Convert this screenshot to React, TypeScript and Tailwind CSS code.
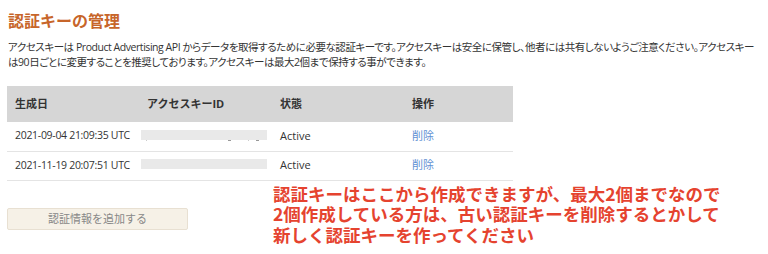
const rows = [
  { created: '2021-09-04 21:09:35 UTC', status: 'Active', specks: true },
  { created: '2021-11-19 20:07:51 UTC', status: 'Active', specks: false },
]

export default function App() {
  return (
    <div className="w-[768px] h-[254px] overflow-hidden bg-white pl-[8px] pt-[8px] text-[#333] font-['Open_Sans','Noto_Sans_CJK_JP',sans-serif]">
      <h1 className="text-[16px] leading-[24px] font-bold text-[#c7652a] font-['Noto_Sans_CJK_JP',sans-serif]">認証キーの管理</h1>

      <p className="mt-[8px] text-[10.5px] leading-[15px] tracking-[-0.45px] whitespace-nowrap [font-feature-settings:'palt']">
        アクセスキーは Product Advertising API からデータを取得するために必要な認証キーです。アクセスキーは安全に保管し、他者には共有しないようご注意ください。アクセスキー
        <br />
        は90日ごとに変更することを推奨しております。アクセスキーは最大2個まで保持する事ができます。
      </p>

      <table className="mt-[16px] -ml-[1px] w-[506px] table-fixed text-[11px] whitespace-nowrap">
        <thead>
          <tr className="bg-[#d6d6d6]">
            <th className="w-[132px] h-[36px] pl-[8px] text-left font-bold">生成日</th>
            <th className="w-[133px] h-[36px] pl-[8px] text-left font-bold">アクセスキーID</th>
            <th className="w-[132px] h-[36px] pl-[8px] text-left font-bold">状態</th>
            <th className="h-[36px] pl-[8px] text-left font-bold">操作</th>
          </tr>
        </thead>
        <tbody>
          {rows.map(r => (
            <tr key={r.created}>
              <td className="h-[29px] pl-[8px] border-b border-[#e4e4e4] text-[10.5px] tracking-[-0.3px]">{r.created}</td>
              <td className="h-[29px] border-b border-[#e4e4e4]">
                <div className="relative ml-[2px] -mt-[3px] w-[126px] h-[10px] bg-[#e9e9e9]">
                  {r.specks && (
                    <>
                      <span className="absolute left-[87px] top-[10px] w-[3px] h-[1px] bg-[#999]" />
                      <span className="absolute left-[115px] top-[10px] w-[3px] h-[1px] bg-[#999]" />
                      <span className="absolute left-[5px] top-[10px] w-[1px] h-[1px] bg-[#ccc]" />
                      <span className="absolute left-[107px] top-[10px] w-[1px] h-[1px] bg-[#ccc]" />
                    </>
                  )}
                </div>
              </td>
              <td className="h-[29px] pl-[8px] border-b border-[#e4e4e4]">{r.status}</td>
              <td className="h-[29px] pl-[8px] border-b border-[#e4e4e4] text-[#5f8fd3]">削除</td>
            </tr>
          ))}
        </tbody>
      </table>

      <div className="flex items-start">
        <button className="mt-[27px] -ml-[1px] w-[181px] h-[22px] rounded-[2px] border border-[#e8e0d2] bg-[#f6f1e7] text-[11px] text-[#888] font-['Noto_Sans_CJK_JP',sans-serif]">
          認証情報を追加する
        </button>
        <p className="mt-[3px] ml-[85px] text-[17.5px] leading-[20.5px] font-bold text-[#e5432f] font-['Noto_Sans_CJK_JP',sans-serif] whitespace-nowrap">
          認証キーはここから作成できますが、最大2個までなので
          <br />
          2個作成している方は、古い認証キーを削除するとかして
          <br />
          新しく認証キーを作ってください
        </p>
      </div>
    </div>
  )
}
